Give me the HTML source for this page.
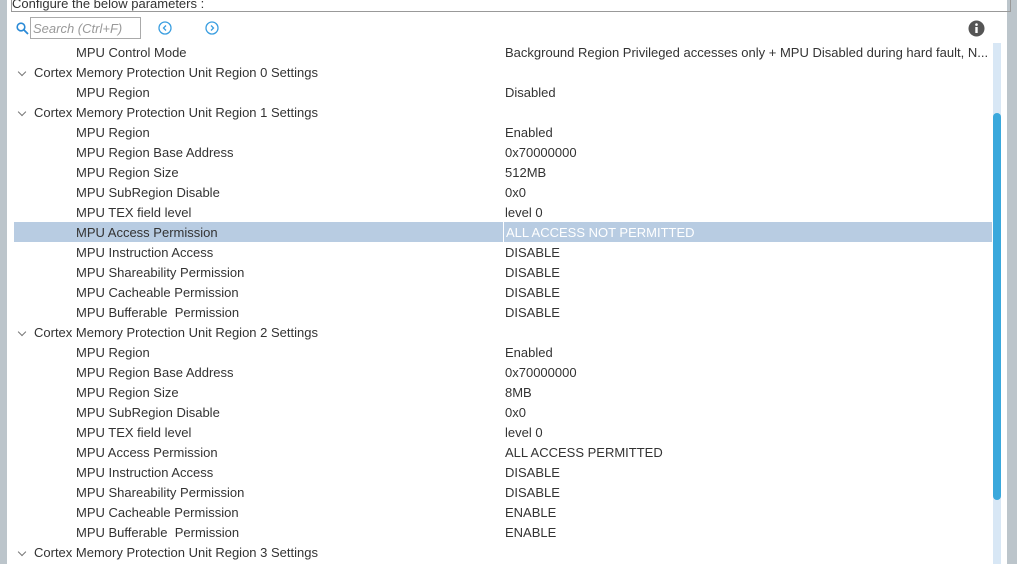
<!DOCTYPE html>
<html><head><style>
body{margin:0;width:1017px;height:564px;overflow:hidden;background:#fff;font-family:"Liberation Sans",sans-serif;font-size:13px;color:#333;position:relative}
.a{position:absolute}
.r{position:absolute;left:14px;width:978px;height:20px;line-height:22px;white-space:nowrap}
.r .n{position:absolute;left:62px}
.r .v{position:absolute;left:491px}
.r.g .n{left:20px}
.chev{position:absolute;left:5px;top:7px;width:5px;height:5px;border-right:1px solid #777;border-bottom:1px solid #777;transform:rotate(45deg)}
.sel{background:#b8cce2}
.sel .v{border-left:1px solid #fff;left:489px;padding-left:2px;color:#fff}
</style></head><body>
<div class="a" style="left:0;top:0;width:7px;height:564px;background:#bcc5cb"></div>
<div class="a" style="left:1007px;top:0;width:10px;height:564px;background:#bcc5cb"></div>
<div class="a" style="left:11px;top:-2px;width:998px;height:13px;border:1px solid #999;border-top:none;font-size:13px;line-height:11px;overflow:hidden;color:#333">Configure the below parameters :</div>
<svg class="a" style="left:16px;top:22px" width="13" height="13"><circle cx="5" cy="5" r="3.8" fill="none" stroke="#2a8ad6" stroke-width="1.6"/><line x1="8" y1="8" x2="12" y2="12" stroke="#2a8ad6" stroke-width="1.8"/></svg>
<div class="a" style="left:30px;top:17px;color:#999;font-style:italic;line-height:22px;padding-left:2px;box-sizing:border-box;width:111px;height:22px;border:1px solid #aaa">Search (Ctrl+F)</div>
<svg class="a" style="left:158px;top:21px" width="14" height="14"><circle cx="7" cy="7" r="6" fill="none" stroke="#3a9ee0" stroke-width="1.3"/><path d="M8 4.5L5.5 7L8 9.5" fill="none" stroke="#3a9ee0" stroke-width="1.3"/></svg>
<svg class="a" style="left:205px;top:21px" width="14" height="14"><circle cx="7" cy="7" r="6" fill="none" stroke="#3a9ee0" stroke-width="1.3"/><path d="M6 4.5L8.5 7L6 9.5" fill="none" stroke="#3a9ee0" stroke-width="1.3"/></svg>
<svg class="a" style="left:968px;top:20px" width="17" height="17"><circle cx="8.5" cy="8.5" r="8" fill="#555"/><rect x="7.3" y="7" width="2.4" height="6" fill="#fff"/><circle cx="8.5" cy="4.6" r="1.3" fill="#fff"/></svg>
<div class="a" style="left:993px;top:43px;width:8px;height:521px;background:#d8e7f5"></div>
<div class="a" style="left:993px;top:113px;width:8px;height:387px;background:#3aa8dc;border-radius:4px"></div>

<div class="r" style="top:42px"><span class="n">MPU Control Mode</span><span class="v">Background Region Privileged accesses only + MPU Disabled during hard fault, N...</span></div>
<div class="r g" style="top:62px"><i class="chev"></i><span class="n">Cortex Memory Protection Unit Region 0 Settings</span></div>
<div class="r" style="top:82px"><span class="n">MPU Region</span><span class="v">Disabled</span></div>
<div class="r g" style="top:102px"><i class="chev"></i><span class="n">Cortex Memory Protection Unit Region 1 Settings</span></div>
<div class="r" style="top:122px"><span class="n">MPU Region</span><span class="v">Enabled</span></div>
<div class="r" style="top:142px"><span class="n">MPU Region Base Address</span><span class="v">0x70000000</span></div>
<div class="r" style="top:162px"><span class="n">MPU Region Size</span><span class="v">512MB</span></div>
<div class="r" style="top:182px"><span class="n">MPU SubRegion Disable</span><span class="v">0x0</span></div>
<div class="r" style="top:202px"><span class="n">MPU TEX field level</span><span class="v">level 0</span></div>
<div class="r sel" style="top:222px"><span class="n">MPU Access Permission</span><span class="v">ALL ACCESS NOT PERMITTED</span></div>
<div class="r" style="top:242px"><span class="n">MPU Instruction Access</span><span class="v">DISABLE</span></div>
<div class="r" style="top:262px"><span class="n">MPU Shareability Permission</span><span class="v">DISABLE</span></div>
<div class="r" style="top:282px"><span class="n">MPU Cacheable Permission</span><span class="v">DISABLE</span></div>
<div class="r" style="top:302px"><span class="n">MPU Bufferable &nbsp;Permission</span><span class="v">DISABLE</span></div>
<div class="r g" style="top:322px"><i class="chev"></i><span class="n">Cortex Memory Protection Unit Region 2 Settings</span></div>
<div class="r" style="top:342px"><span class="n">MPU Region</span><span class="v">Enabled</span></div>
<div class="r" style="top:362px"><span class="n">MPU Region Base Address</span><span class="v">0x70000000</span></div>
<div class="r" style="top:382px"><span class="n">MPU Region Size</span><span class="v">8MB</span></div>
<div class="r" style="top:402px"><span class="n">MPU SubRegion Disable</span><span class="v">0x0</span></div>
<div class="r" style="top:422px"><span class="n">MPU TEX field level</span><span class="v">level 0</span></div>
<div class="r" style="top:442px"><span class="n">MPU Access Permission</span><span class="v">ALL ACCESS PERMITTED</span></div>
<div class="r" style="top:462px"><span class="n">MPU Instruction Access</span><span class="v">DISABLE</span></div>
<div class="r" style="top:482px"><span class="n">MPU Shareability Permission</span><span class="v">DISABLE</span></div>
<div class="r" style="top:502px"><span class="n">MPU Cacheable Permission</span><span class="v">ENABLE</span></div>
<div class="r" style="top:522px"><span class="n">MPU Bufferable &nbsp;Permission</span><span class="v">ENABLE</span></div>
<div class="r g" style="top:542px"><i class="chev"></i><span class="n">Cortex Memory Protection Unit Region 3 Settings</span></div>
</body></html>
